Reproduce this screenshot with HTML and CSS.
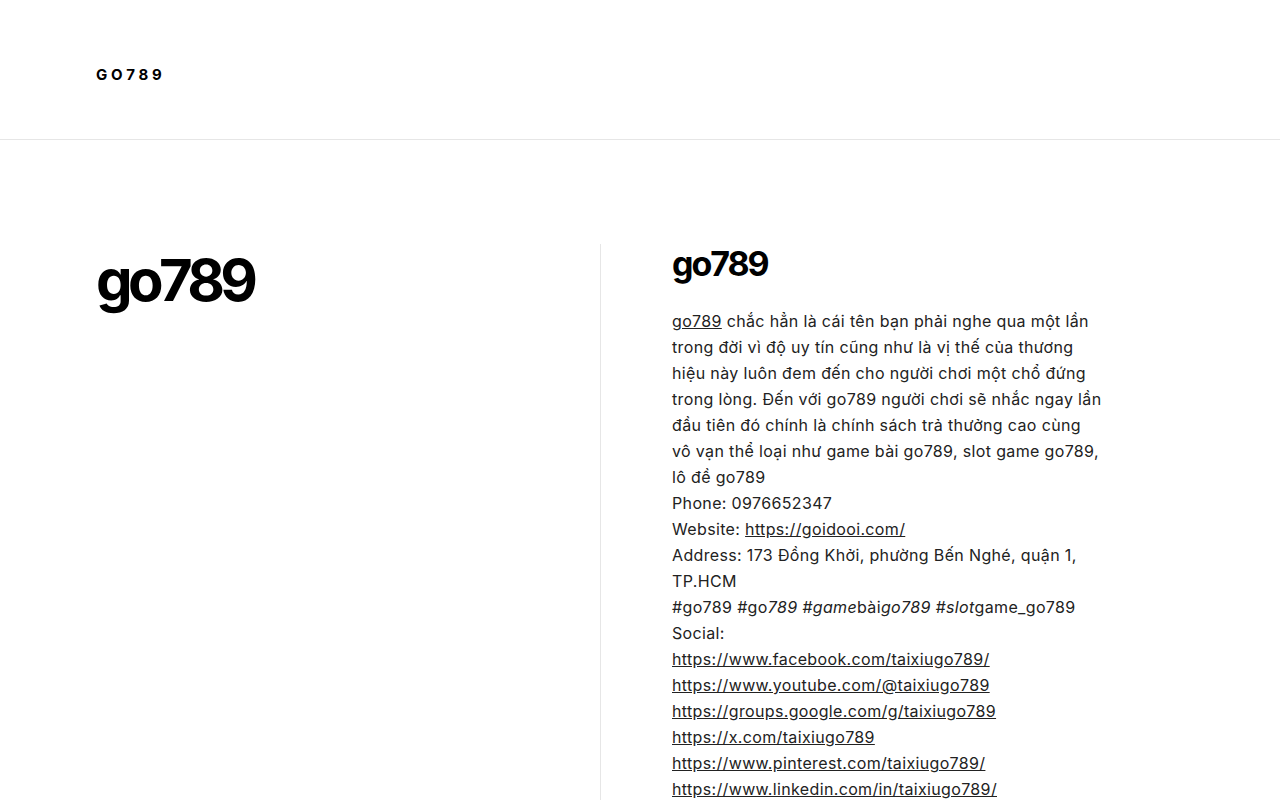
FILE: index.html
```html
<!DOCTYPE html>
<html lang="vi">
<head>
    <meta charset="UTF-8">
    <meta name="viewport" content="width=device-width, initial-scale=1.0">
    <title>go789</title>
    <link rel="stylesheet" href="styles.css">
</head>
<body>
    <header class="site-header">
        <a class="logo" href="#">GO789</a>
    </header>

    <main class="profile">
        <div class="profile-title">
            <h1>go789</h1>
        </div>
        <div class="profile-body">
            <h2>go789</h2>
            <p>
                <a href="#">go789</a> chắc hẳn là cái tên bạn phải nghe qua một lần trong đời vì độ uy tín cũng như là vị thế của thương hiệu này luôn đem đến cho người chơi một chổ đứng trong lòng. Đến với go789 người chơi sẽ nhắc ngay lần đầu tiên đó chính là chính sách trả thưởng cao cùng vô vạn thể loại như game bài go789, slot game go789, lô đề go789<br>
                Phone: 0976652347<br>
                Website: <a href="#">https://goidooi.com/</a><br>
                Address: 173 Đồng Khởi, phường Bến Nghé, quận 1, TP.HCM<br>
                #go789 #go<em>789 #game</em>bài<em>go789 #slot</em>game_go789<br>
                Social:<br>
                <a href="#">https://www.facebook.com/taixiugo789/</a><br>
                <a href="#">https://www.youtube.com/@taixiugo789</a><br>
                <a href="#">https://groups.google.com/g/taixiugo789</a><br>
                <a href="#">https://x.com/taixiugo789</a><br>
                <a href="#">https://www.pinterest.com/taixiugo789/</a><br>
                <a href="#">https://www.linkedin.com/in/taixiugo789/</a>
            </p>
        </div>
    </main>
</body>
</html>
```

FILE: styles.css
```css
body {
  margin: 0;
  font-family: 'Inter', 'Noto Sans', sans-serif;
  color: #222;
  background: #fff;
}

a {
  color: inherit;
}

.site-header {
  height: 140px;
  padding: 9px 96px 0;
  display: flex;
  align-items: center;
  border-bottom: 1px solid #e6e6e6;
  box-sizing: border-box;
}

.logo {
  font-size: 15px;
  font-weight: 700;
  letter-spacing: 0.25em;
  text-decoration: none;
  color: #000;
}

.profile {
  display: grid;
  grid-template-columns: 505px 1fr;
  padding: 104px 96px 0;
}

.profile-title {
  border-right: 1px solid #e6e6e6;
}

.profile-title h1 {
  margin: 0;
  font-size: 58px;
  font-weight: 700;
  letter-spacing: -0.08em;
  line-height: 72px;
  color: #000;
}

.profile-body {
  padding-left: 71px;
  max-width: 432px;
}

.profile-body h2 {
  margin: 0 0 24px;
  font-size: 34px;
  font-weight: 700;
  letter-spacing: -0.06em;
  line-height: 40px;
  color: #000;
}

.profile-body p {
  margin: 0;
  font-size: 16px;
  line-height: 26px;
  letter-spacing: 0.35px;
}
```
